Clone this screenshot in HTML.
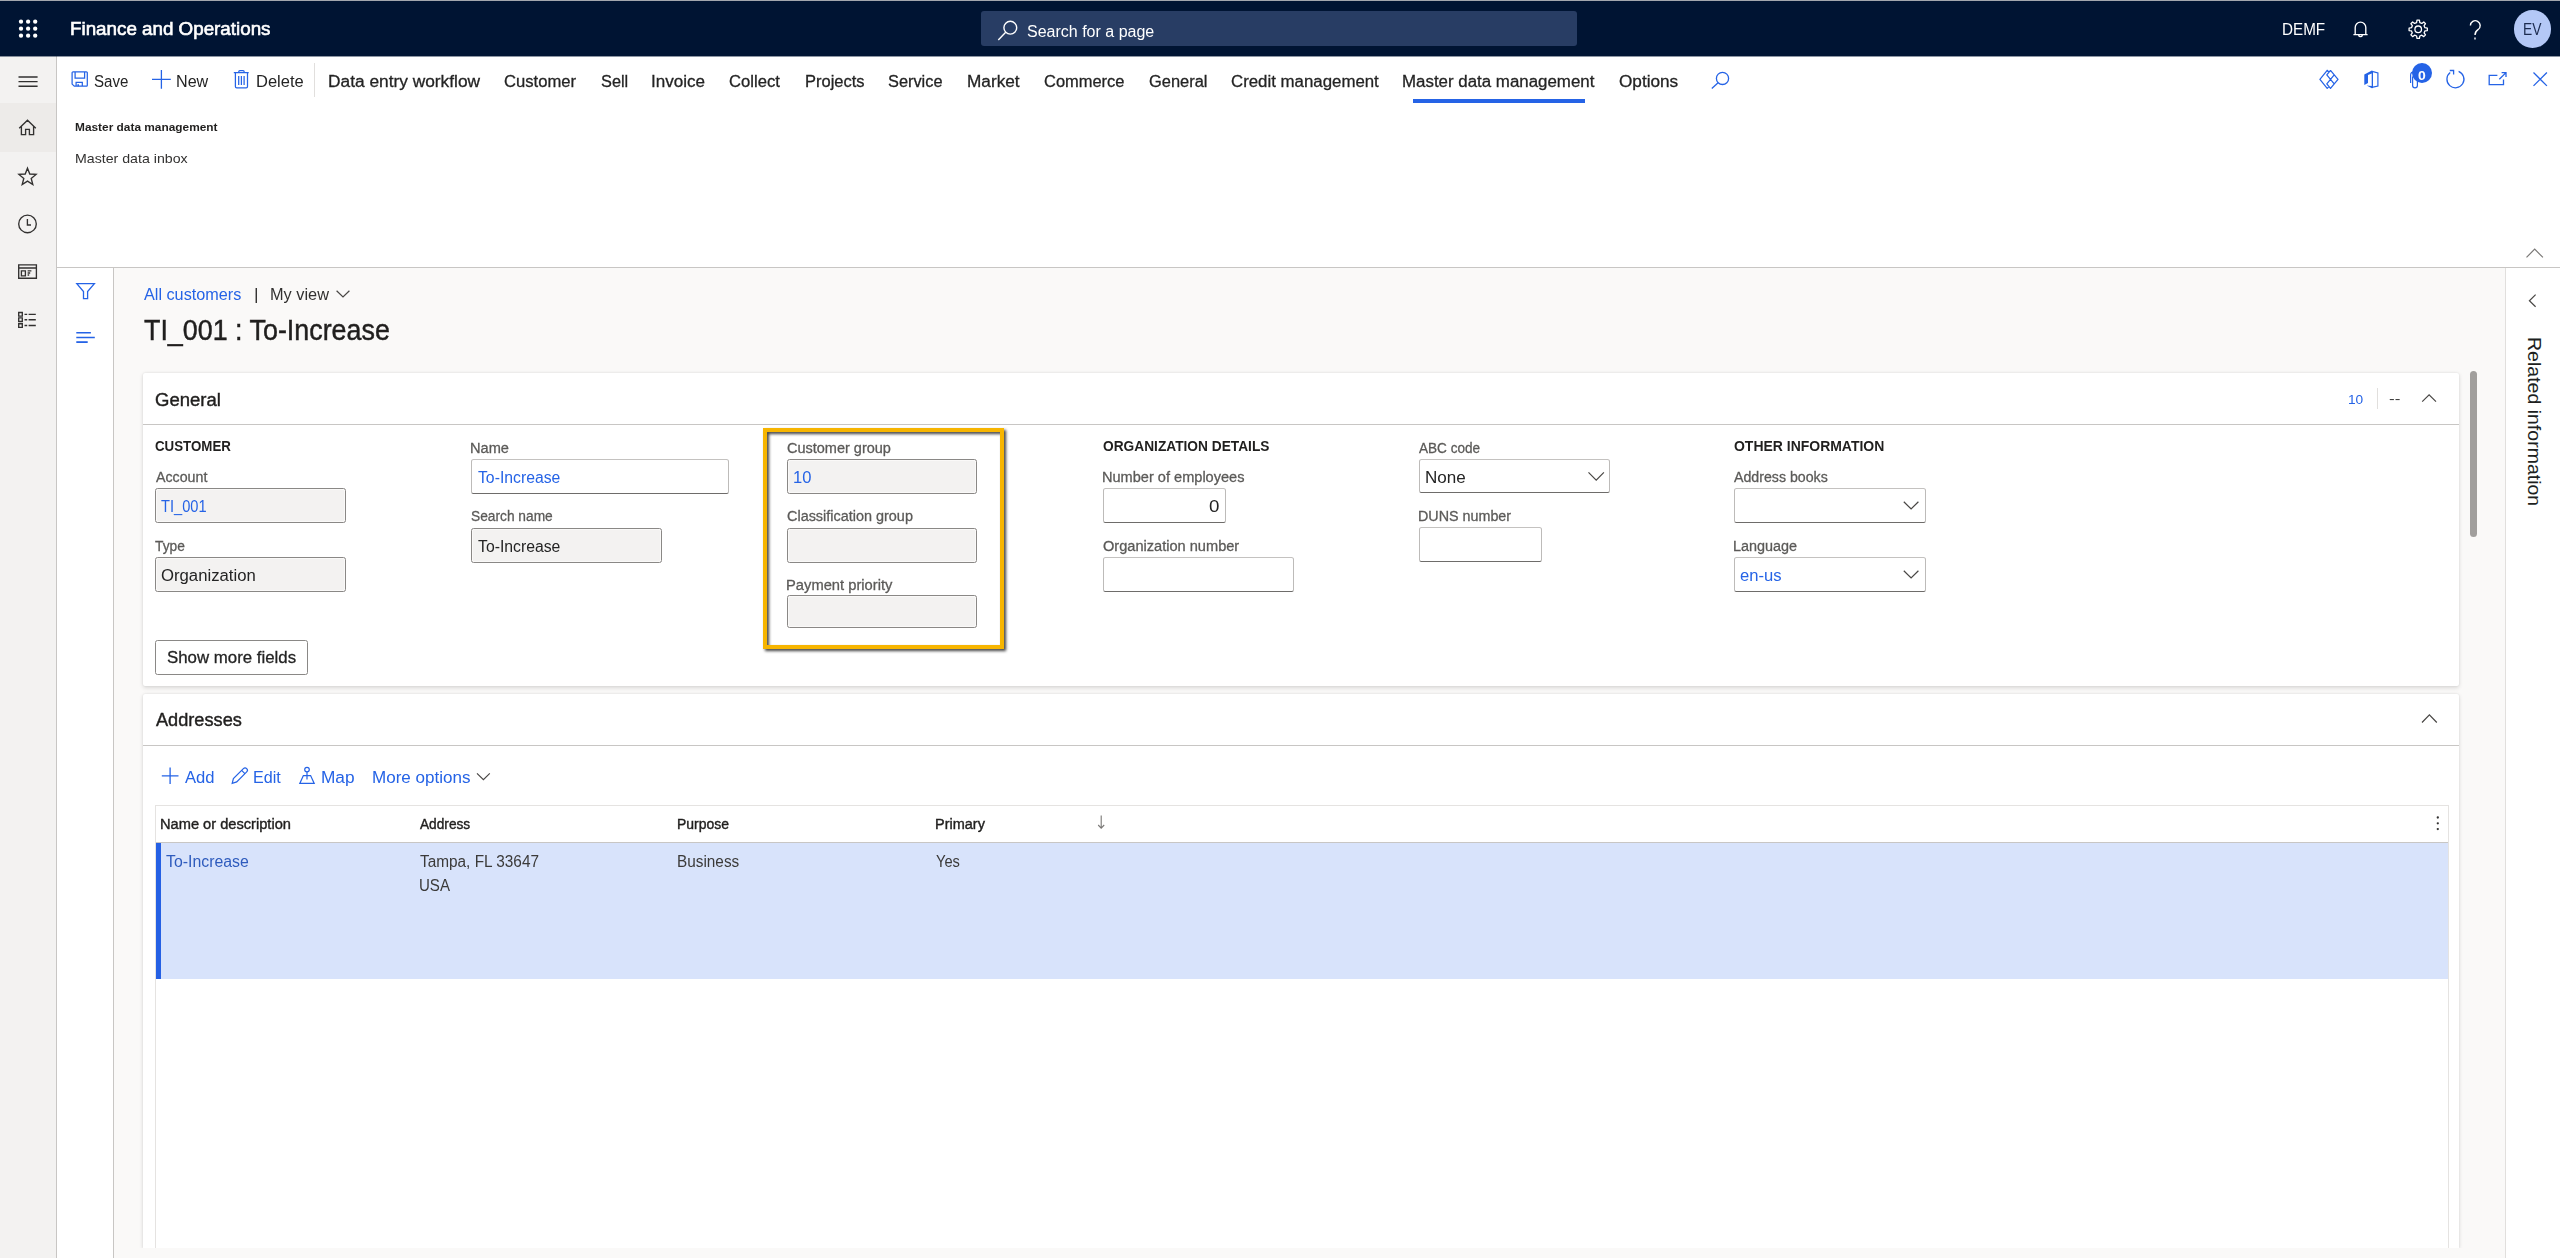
<!DOCTYPE html>
<html lang="en">
<head>
<meta charset="utf-8">
<title>TI_001 : To-Increase - Finance and Operations</title>
<style>
*{box-sizing:border-box;margin:0;padding:0}
html,body{width:2560px;height:1258px;overflow:hidden}
body{position:relative;background:#faf9f8;font-family:"Liberation Sans",sans-serif;color:#242424}
.abs,.t,svg.i{position:absolute}
.t{white-space:pre;line-height:1;transform-origin:0 50%;display:block}
svg.i{overflow:visible;fill:none;stroke-linecap:butt;stroke-linejoin:miter}
/* top bar */
#topline{left:0;top:0;width:2560px;height:1px;background:#a3a7ae;z-index:5}
#header{left:0;top:0;width:2560px;height:56px;background:#001433}
#hdredge{left:0;top:56px;width:2560px;height:1px;background:rgba(0,20,51,.45);z-index:6}
#searchbox{left:981px;top:11px;width:596px;height:35px;border-radius:3px;background:#283d64}
#avatar{left:2513.7px;top:10px;width:37.5px;height:37.5px;border-radius:50%;background:#b4c8f6}
/* left nav */
#nav{left:0;top:56px;width:56px;height:1202px;background:#f3f2f1}
#navline{left:56px;top:56px;width:1px;height:1202px;background:#c8c6c4}
#navsel{left:0;top:103px;width:56px;height:48.5px;background:#edebe9}
/* action pane */
#pane{left:57px;top:56px;width:2503px;height:211px;background:#fff}
#paneline{left:57px;top:267px;width:2503px;height:1px;background:#c8c6c4}
#absep{left:314px;top:63px;width:1px;height:34px;background:#e1dfdd}
#tabline{left:1413px;top:99px;width:172px;height:4px;background:#2563e6}
#badge{left:2412.2px;top:63.1px;width:19.8px;height:19.8px;border-radius:50%;background:#2563e6}
/* filter strip */
#strip{left:57px;top:268px;width:56px;height:990px;background:#fff}
#stripline{left:113px;top:268px;width:1px;height:990px;background:#c8c6c4}
/* right panel */
#rpanel{left:2506px;top:268px;width:54px;height:990px;background:#fff}
#rpline{left:2505px;top:268px;width:1px;height:990px;background:#e1dfdd}
#scroll{left:2470px;top:371px;width:7px;height:166px;border-radius:3.5px;background:#a19f9d}
/* cards */
.card{background:#fff;border-radius:2px;box-shadow:0 1.5px 4px rgba(0,0,0,.13),0 0 2px rgba(0,0,0,.08)}
#card1{left:143px;top:373px;width:2316px;height:313px}
#card2{left:143px;top:694px;width:2316px;height:553.5px;border-bottom-left-radius:0;border-bottom-right-radius:0}
.hline{height:1px;background:#c8c6c4}
#c1line{left:143px;top:424px;width:2316px}
#c2line{left:143px;top:745px;width:2316px}
#c1sep{left:2377px;top:388px;width:1px;height:21px;background:#e1dfdd}
/* inputs */
.in{border:1px solid #8a8886;border-radius:2.5px;background:#fff}
.ro{background:#f3f2f1;box-shadow:inset 0 0 0 1px #faf9f8}
.ed{border-color:#c4c2c0 #bdbbb9 #6e6c6a #bdbbb9}
#btnmore{left:155px;top:640px;width:153px;height:35px;border:1px solid #8a8886;border-radius:2.5px;background:#fff}
/* highlight frame */
#hl{left:763px;top:428px;width:241px;height:221px;border:4.2px solid #f7b500;filter:drop-shadow(2.5px 2.5px 1.6px rgba(0,0,0,.75))}
/* grid */
#grid{left:155px;top:805px;width:2294px;height:443px;border:1px solid #e5e3e1;border-bottom:0;background:#fff}
#ghline{left:156px;top:842px;width:2292px;height:1px;background:#c8c6c4}
#grow{left:156px;top:843px;width:2292px;height:136px;background:#d8e3fb}
#gbar{left:156px;top:843px;width:5px;height:136px;background:#2560e4}
#botmask{left:114px;top:1247.5px;width:2391px;height:11px;background:#faf9f8}

</style>
</head>
<body>
<!-- ===== Top navigation bar ===== -->
<div id="header" class="abs"></div>
<div id="topline" class="abs"></div>
<div id="hdredge" class="abs"></div>
<div id="searchbox" class="abs"></div>
<div id="avatar" class="abs"></div>
<!-- ===== Left navigation rail ===== -->
<div id="nav" class="abs"></div>
<div id="navsel" class="abs"></div>
<div id="navline" class="abs"></div>
<!-- ===== Action pane ===== -->
<div id="pane" class="abs"></div>
<div id="paneline" class="abs"></div>
<div id="absep" class="abs"></div>
<div id="tabline" class="abs"></div>
<!-- ===== Page chrome ===== -->
<div id="strip" class="abs"></div>
<div id="stripline" class="abs"></div>
<div id="rpanel" class="abs"></div>
<div id="rpline" class="abs"></div>
<div id="scroll" class="abs"></div>
<!-- ===== General fast tab ===== -->
<div id="card1" class="abs card"></div>
<div id="c1line" class="abs hline"></div>
<div id="c1sep" class="abs"></div>
<div class="abs in ro" style="left:155px;top:488px;width:191px;height:35px"></div>
<div class="abs in ro" style="left:155px;top:557px;width:191px;height:35px"></div>
<div class="abs in ed" style="left:471px;top:459px;width:258px;height:35px"></div>
<div class="abs in ro" style="left:471px;top:528px;width:191px;height:35px"></div>
<div class="abs in ro" style="left:787px;top:459px;width:190px;height:35px"></div>
<div class="abs in ro" style="left:787px;top:528px;width:190px;height:35px"></div>
<div class="abs in ro" style="left:787px;top:595px;width:190px;height:33px"></div>
<div class="abs in ed" style="left:1103px;top:488px;width:123px;height:35px"></div>
<div class="abs in ed" style="left:1103px;top:557px;width:191px;height:35px"></div>
<div class="abs in ed" style="left:1419px;top:459px;width:191px;height:34px"></div>
<div class="abs in ed" style="left:1419px;top:527px;width:123px;height:35px"></div>
<div class="abs in ed" style="left:1734px;top:488px;width:192px;height:35px"></div>
<div class="abs in ed" style="left:1734px;top:557px;width:192px;height:35px"></div>
<div id="btnmore" class="abs"></div>
<div id="hl" class="abs"></div>
<!-- ===== Addresses fast tab ===== -->
<div id="card2" class="abs card"></div>
<div id="c2line" class="abs hline"></div>
<div id="grid" class="abs"></div>
<div id="ghline" class="abs"></div>
<div id="grow" class="abs"></div>
<div id="gbar" class="abs"></div>
<div id="botmask" class="abs"></div>
<div id="badge" class="abs"></div>
<svg class="i" id="icons" style="left:0;top:0" width="2560" height="1258" viewBox="0 0 2560 1258">
<g id="ic-waffle" fill="#fff" stroke="none">
<circle cx="21.0" cy="21.7" r="2.15"/>
<circle cx="28.1" cy="21.7" r="2.15"/>
<circle cx="35.2" cy="21.7" r="2.15"/>
<circle cx="21.0" cy="28.7" r="2.15"/>
<circle cx="28.1" cy="28.7" r="2.15"/>
<circle cx="35.2" cy="28.7" r="2.15"/>
<circle cx="21.0" cy="35.7" r="2.15"/>
<circle cx="28.1" cy="35.7" r="2.15"/>
<circle cx="35.2" cy="35.7" r="2.15"/>
</g>
<g id="ic-hsearch" stroke="#fff" stroke-width="1.4"><circle cx="1010.3" cy="27.7" r="6.4"/><path d="M1005.7 32.3L998.3 39.9"/></g>
<g id="ic-bell" stroke="#fff" stroke-width="1.35"><path d="M2353.4 34.6H2367.6M2355.2 34.6V27.4a5.3 5.3 0 0 1 10.6 0V34.6M2358.6 35.2a2 2 0 0 0 3.8 0"/></g>
<g id="ic-gear" stroke="#fff" stroke-width="1.3" stroke-linejoin="round"><path d="M2427.32 28.08L2427.32 30.52L2424.91 30.91L2424.08 32.91L2425.51 34.88L2423.78 36.61L2421.81 35.18L2419.81 36.01L2419.42 38.42L2416.98 38.42L2416.59 36.01L2414.59 35.18L2412.62 36.61L2410.89 34.88L2412.32 32.91L2411.49 30.91L2409.08 30.52L2409.08 28.08L2411.49 27.69L2412.32 25.69L2410.89 23.72L2412.62 21.99L2414.59 23.42L2416.59 22.59L2416.98 20.18L2419.42 20.18L2419.81 22.59L2421.81 23.42L2423.78 21.99L2425.51 23.72L2424.08 25.69L2424.91 27.69Z"/><circle cx="2418.2" cy="29.3" r="3.3"/></g>
<g id="ic-help" stroke="#fff" stroke-width="1.4"><path d="M2470.4 25.6a4.9 4.9 0 1 1 7.6 4.1c-2.2 1.5-3 2.6-3 5.3"/><path d="M2475 37.6V39.4"/></g>
<g id="ic-nav" stroke="#323130" stroke-width="1.35">
<path d="M18.5 77H37.6M18.5 81.6H37.6M18.5 86.2H37.6"/>
<path d="M19.2 128.2L27.5 120.2L35.8 128.2M21.4 126.6V134.6H25.6V129.4H29.4V134.6H33.6V126.6"/>
<path d="M27.50 168.20L29.79 174.04L36.06 174.42L31.21 178.41L32.79 184.48L27.50 181.10L22.21 184.48L23.79 178.41L18.94 174.42L25.21 174.04Z"/>
<circle cx="27.5" cy="223.9" r="8.8"/><path d="M27.4 219V225H31"/>
<path d="M18.7 264.8H36.4V278.2H18.7ZM18.7 268H36.4M21.4 270.8H25.4V275.8H21.4ZM27.6 270.9H31.4M27.6 273H30.2M27.6 275H29.2"/>
<path d="M18.7 312.5h3.6v3.6h-3.6ZM24.5 314.3H27.2M28.6 314.3H35.8"/>
<path d="M18.7 317.9h3.6v3.6h-3.6ZM24.5 319.7H27.2M28.6 319.7H35.8"/>
<path d="M18.7 323.7h3.6v3.6h-3.6ZM24.5 325.5H27.2M28.6 325.5H35.8"/>
</g>
<g id="ic-actions" stroke="#2563e6" stroke-width="1.3">
<path d="M73.1 71.9H86.4a.9 .9 0 0 1 .9 .9V85.3a.9 .9 0 0 1-.9 .9H74.3L72.1 84.1V72.8a.9 .9 0 0 1 1-.9ZM75.1 72V78.2H84.6V72M76.1 86.1V82.4H82.3V86.1" stroke-width="1.25"/><path d="M78.2 84.3V86.2" stroke-width="1.5"/>
<path d="M152 79.3H170.8M161.4 70V88.8"/>
<path d="M233.8 72.5H248.7M238.8 72.4V71.6a1 1 0 0 1 1-1H243.1a1 1 0 0 1 1 1V72.4M235.4 72.6V86.6a1.3 1.3 0 0 0 1.3 1.3H246.2a1.3 1.3 0 0 0 1.3-1.3V72.6M238.7 76V84.9M241.4 76V84.9M244.1 76V84.9" stroke-width="1.25"/>
<circle cx="1722.5" cy="78.4" r="6.1"/><path d="M1718.1 82.7L1711.8 88.5"/>
<path d="M2328.9 72.1L2327.2 70.3L2319.9 79.3L2327.2 88.4L2328.9 86.6M2330.5 70.3L2338 79.3L2330.5 88.4L2326.8 83.8L2334.2 74.8M2330.5 70.3L2326.8 74.8L2334.2 83.8" stroke-width="1.25" stroke-linejoin="round"/>
<path d="M2364.3 74.6L2371.9 70.6L2373 70.9V88L2371.9 88.2L2366.6 85.4L2371.7 85.9V73.4L2368 75V83L2364.3 84.9Z" fill="#2563e6" stroke="none"/>
<path d="M2373 71.7L2377.9 72.9V86L2373 87.2" stroke-width="1.2"/>
<path d="M2410.6 83V75.2a3.4 3.4 0 0 1 6.8 0V85.4a2.4 2.4 0 0 1-4.8 0V76.6" stroke-width="1.2"/>
<path d="M2458.6 71.4A8.5 8.5 0 1 1 2450.2 72.6M2449.8 70.5H2453.6V74.4"/>
<path d="M2497.4 75.3H2489.2V84.6H2503.5V79.6M2499.3 79.3L2506 72.6M2501.6 72.6H2506V77"/>
<path d="M2533.5 72.5L2546.9 85.9M2546.9 72.5L2533.5 85.9"/>
<path d="M76.8 283.6H94.4L87.6 291.6V298.6H83.5V291.6Z"/>
<path d="M76.3 332.7H90.9M76.3 337.5H94.8" stroke-width="1.4"/><path d="M76.3 342.1H87.7" stroke-width="1.8"/>
<path d="M161.8 775.8H178.5M170.1 767.4V784.1"/>
<path d="M232.2 783.4L233.4 778.6L243.4 768.6a2.3 2.3 0 0 1 3.3 3.3L236.7 781.9ZM241.6 770.4L244.9 773.7" stroke-width="1.2"/>
<circle cx="307" cy="769.6" r="2.3" stroke-width="1.2"/><path d="M307 772V779.4M303.4 775.6L299.8 783.4H314.2L310.6 775.6Z" stroke-width="1.2"/>
</g>
<g id="ic-chev" stroke="#484644" stroke-width="1.2">
<path d="M336.6 290.7L343 297L349.4 290.7"/>
<path d="M477 773.4L483.4 779.6L489.8 773.4"/>
<path d="M2422.2 401.6L2429.1 394.8L2436 401.6"/>
<path d="M2422 722.5L2429.4 714.8L2436.8 722.5"/>
<path d="M1588.5 472.4L1596.2 480.1L1603.9 472.4"/>
<path d="M1903.8 501.8L1911.1 509L1918.4 501.8"/>
<path d="M1903.8 570.8L1911.1 578L1918.4 570.8"/>
<path d="M2535.6 294.6L2529.4 300.7L2535.6 306.8"/>
</g>
<g id="ic-gray" stroke="#7a7876" stroke-width="1.2">
<path d="M2526.5 257.4L2534.7 249.2L2542.9 257.4"/>
<path d="M1101.2 815.6V828M1098.2 825L1101.2 828.2L1104.2 825" stroke-width="1.1"/>
</g>
<g id="ic-more" fill="#323130" stroke="none"><circle cx="2437.8" cy="817.5" r="1.15"/><circle cx="2437.8" cy="823.3" r="1.15"/><circle cx="2437.8" cy="829.1" r="1.15"/></g>
</svg>

<!-- text layer -->
<div id="text-layer">
<header id="txt-header" aria-label="Top navigation bar">
<span class="t" style="left:70.31px;top:20px;font-size:18.6px;color:#ffffff;font-weight:400;-webkit-text-stroke:0.62px currentColor;transform:scaleX(1.0103);">Finance and Operations</span>
<span class="t" style="left:1027.24px;top:24px;font-size:16px;color:#ffffff;font-weight:400;transform:scaleX(1.0004);">Search for a page</span>
<span class="t" style="left:2281.72px;top:22px;font-size:16px;color:#ffffff;font-weight:400;transform:scaleX(0.9521);">DEMF</span>
<span class="t" style="left:2523.19px;top:22px;font-size:16px;color:#1c2b4f;font-weight:400;transform:scaleX(0.8645);">EV</span>
</header>
<nav id="txt-actionpane" aria-label="Action pane">
<span class="t" style="left:94.29px;top:74px;font-size:16px;color:#242424;font-weight:400;transform:scaleX(0.9424);">Save</span>
<span class="t" style="left:176.09px;top:74px;font-size:16px;color:#242424;font-weight:400;transform:scaleX(1.0075);">New</span>
<span class="t" style="left:256.43px;top:74px;font-size:16px;color:#242424;font-weight:400;transform:scaleX(1.0311);">Delete</span>
<span class="t" style="left:327.68px;top:74px;font-size:16px;color:#242424;font-weight:400;-webkit-text-stroke:0.28px currentColor;transform:scaleX(1.0824);">Data entry workflow</span>
<span class="t" style="left:503.96px;top:74px;font-size:16px;color:#242424;font-weight:400;-webkit-text-stroke:0.28px currentColor;transform:scaleX(1.0387);">Customer</span>
<span class="t" style="left:600.60px;top:74px;font-size:16px;color:#242424;font-weight:400;-webkit-text-stroke:0.28px currentColor;transform:scaleX(1.0192);">Sell</span>
<span class="t" style="left:651.30px;top:74px;font-size:16px;color:#242424;font-weight:400;-webkit-text-stroke:0.28px currentColor;transform:scaleX(1.0658);">Invoice</span>
<span class="t" style="left:729.35px;top:74px;font-size:16px;color:#242424;font-weight:400;-webkit-text-stroke:0.28px currentColor;transform:scaleX(1.0388);">Collect</span>
<span class="t" style="left:804.67px;top:74px;font-size:16px;color:#242424;font-weight:400;-webkit-text-stroke:0.28px currentColor;transform:scaleX(1.0297);">Projects</span>
<span class="t" style="left:888.42px;top:74px;font-size:16px;color:#242424;font-weight:400;-webkit-text-stroke:0.28px currentColor;transform:scaleX(1.0209);">Service</span>
<span class="t" style="left:966.68px;top:74px;font-size:16px;color:#242424;font-weight:400;-webkit-text-stroke:0.28px currentColor;transform:scaleX(1.0757);">Market</span>
<span class="t" style="left:1044.03px;top:74px;font-size:16px;color:#242424;font-weight:400;-webkit-text-stroke:0.28px currentColor;transform:scaleX(1.0280);">Commerce</span>
<span class="t" style="left:1148.84px;top:74px;font-size:16px;color:#242424;font-weight:400;-webkit-text-stroke:0.28px currentColor;transform:scaleX(1.0278);">General</span>
<span class="t" style="left:1230.87px;top:74px;font-size:16px;color:#242424;font-weight:400;-webkit-text-stroke:0.28px currentColor;transform:scaleX(1.0518);">Credit management</span>
<span class="t" style="left:1402.20px;top:74px;font-size:16px;color:#242424;font-weight:400;-webkit-text-stroke:0.28px currentColor;transform:scaleX(1.0550);">Master data management</span>
<span class="t" style="left:1619.45px;top:74px;font-size:16px;color:#242424;font-weight:400;-webkit-text-stroke:0.28px currentColor;transform:scaleX(1.0728);">Options</span>
<span class="t" style="left:2418.36px;top:69px;font-size:13.6px;color:#ffffff;font-weight:700;transform:scaleX(1.0273);">0</span>
<span class="t" style="left:74.69px;top:122px;font-size:11.8px;color:#201f1e;font-weight:700;transform:scaleX(1.0065);">Master data management</span>
<span class="t" style="left:74.80px;top:152px;font-size:13.6px;color:#323130;font-weight:400;transform:scaleX(1.0422);">Master data inbox</span>
</nav>
<div id="txt-pagehead" aria-label="Page title">
<span class="t" style="left:144.28px;top:287px;font-size:16px;color:#2563e6;font-weight:400;transform:scaleX(1.0130);">All customers</span>
<span class="t" style="left:253.55px;top:287px;font-size:16px;color:#323130;font-weight:400;transform:scaleX(1.0894);">|</span>
<span class="t" style="left:269.97px;top:287px;font-size:16px;color:#323130;font-weight:400;transform:scaleX(1.0196);">My view</span>
<span class="t" style="left:144.22px;top:316px;font-size:28.6px;color:#201f1e;font-weight:400;-webkit-text-stroke:0.45px currentColor;transform:scaleX(0.9393);">TI_001 : To-Increase</span>
</div>
<section id="txt-general" aria-label="General fast tab">
<span class="t" style="left:155.09px;top:391px;font-size:18px;color:#201f1e;font-weight:400;-webkit-text-stroke:0.42px currentColor;transform:scaleX(1.0279);">General</span>
<span class="t" style="left:2347.98px;top:393px;font-size:13.6px;color:#2563e6;font-weight:400;transform:scaleX(1.0073);">10</span>
<span class="t" style="left:2389.18px;top:392px;font-size:13.6px;color:#323130;font-weight:400;transform:scaleX(1.2498);">--</span>
<span class="t" style="left:154.53px;top:440px;font-size:13.8px;color:#201f1e;font-weight:700;transform:scaleX(0.9648);">CUSTOMER</span>
<span class="t" style="left:155.85px;top:471px;font-size:13.8px;color:#5b5a58;font-weight:400;-webkit-text-stroke:0.28px currentColor;transform:scaleX(1.0300);">Account</span>
<span class="t" style="left:161.26px;top:499px;font-size:16px;color:#2563e6;font-weight:400;transform:scaleX(0.9140);">TI_001</span>
<span class="t" style="left:155.37px;top:540px;font-size:13.8px;color:#5b5a58;font-weight:400;-webkit-text-stroke:0.28px currentColor;transform:scaleX(0.9958);">Type</span>
<span class="t" style="left:161.20px;top:568px;font-size:16px;color:#242424;font-weight:400;transform:scaleX(1.0444);">Organization</span>
<span class="t" style="left:470.32px;top:442px;font-size:13.8px;color:#5b5a58;font-weight:400;-webkit-text-stroke:0.28px currentColor;transform:scaleX(1.0589);">Name</span>
<span class="t" style="left:477.98px;top:470px;font-size:16px;color:#2563e6;font-weight:400;transform:scaleX(0.9842);">To-Increase</span>
<span class="t" style="left:470.56px;top:510px;font-size:13.8px;color:#5b5a58;font-weight:400;-webkit-text-stroke:0.28px currentColor;transform:scaleX(0.9960);">Search name</span>
<span class="t" style="left:477.93px;top:539px;font-size:16px;color:#242424;font-weight:400;transform:scaleX(0.9852);">To-Increase</span>
<span class="t" style="left:787.13px;top:442px;font-size:13.8px;color:#5b5a58;font-weight:400;-webkit-text-stroke:0.28px currentColor;transform:scaleX(1.0506);">Customer group</span>
<span class="t" style="left:792.75px;top:470px;font-size:16px;color:#2563e6;font-weight:400;transform:scaleX(1.0329);">10</span>
<span class="t" style="left:787.06px;top:510px;font-size:13.8px;color:#5b5a58;font-weight:400;-webkit-text-stroke:0.28px currentColor;transform:scaleX(1.0458);">Classification group</span>
<span class="t" style="left:785.90px;top:579px;font-size:13.8px;color:#5b5a58;font-weight:400;-webkit-text-stroke:0.28px currentColor;transform:scaleX(1.0678);">Payment priority</span>
<span class="t" style="left:1102.52px;top:440px;font-size:13.8px;color:#201f1e;font-weight:700;transform:scaleX(0.9945);">ORGANIZATION DETAILS</span>
<span class="t" style="left:1101.93px;top:471px;font-size:13.8px;color:#5b5a58;font-weight:400;-webkit-text-stroke:0.28px currentColor;transform:scaleX(1.0557);">Number of employees</span>
<span class="t" style="left:1209.43px;top:499px;font-size:16px;color:#242424;font-weight:400;transform:scaleX(1.1688);">0</span>
<span class="t" style="left:1102.57px;top:540px;font-size:13.8px;color:#5b5a58;font-weight:400;-webkit-text-stroke:0.28px currentColor;transform:scaleX(1.0572);">Organization number</span>
<span class="t" style="left:1419.10px;top:442px;font-size:13.8px;color:#5b5a58;font-weight:400;-webkit-text-stroke:0.28px currentColor;transform:scaleX(0.9846);">ABC code</span>
<span class="t" style="left:1424.84px;top:470px;font-size:16px;color:#242424;font-weight:400;transform:scaleX(1.0659);">None</span>
<span class="t" style="left:1418.14px;top:510px;font-size:13.8px;color:#5b5a58;font-weight:400;-webkit-text-stroke:0.28px currentColor;transform:scaleX(1.0375);">DUNS number</span>
<span class="t" style="left:1734.37px;top:440px;font-size:13.8px;color:#201f1e;font-weight:700;transform:scaleX(1.0124);">OTHER INFORMATION</span>
<span class="t" style="left:1734.30px;top:471px;font-size:13.8px;color:#5b5a58;font-weight:400;-webkit-text-stroke:0.28px currentColor;transform:scaleX(1.0276);">Address books</span>
<span class="t" style="left:1733.13px;top:540px;font-size:13.8px;color:#5b5a58;font-weight:400;-webkit-text-stroke:0.28px currentColor;transform:scaleX(1.0435);">Language</span>
<span class="t" style="left:1740.20px;top:568px;font-size:16px;color:#2563e6;font-weight:400;transform:scaleX(1.0379);">en-us</span>
<span class="t" style="left:166.59px;top:650px;font-size:16px;color:#242424;font-weight:400;-webkit-text-stroke:0.28px currentColor;transform:scaleX(1.0520);">Show more fields</span>
</section>
<aside id="txt-related" aria-label="Related information">
<span class="t" style="left:2542.60px;top:336.93px;font-size:18.8px;color:#201f1e;font-weight:400;transform-origin:0 0;transform:rotate(90deg) scaleX(1.0390);">Related information</span>
</aside>
<section id="txt-addresses" aria-label="Addresses fast tab">
<span class="t" style="left:155.55px;top:711px;font-size:18px;color:#201f1e;font-weight:400;-webkit-text-stroke:0.42px currentColor;transform:scaleX(1.0090);">Addresses</span>
<span class="t" style="left:184.81px;top:770px;font-size:16px;color:#2563e6;font-weight:400;transform:scaleX(1.0368);">Add</span>
<span class="t" style="left:253.21px;top:770px;font-size:16px;color:#2563e6;font-weight:400;transform:scaleX(1.0070);">Edit</span>
<span class="t" style="left:321.26px;top:770px;font-size:16px;color:#2563e6;font-weight:400;transform:scaleX(1.0781);">Map</span>
<span class="t" style="left:372.08px;top:770px;font-size:16px;color:#2563e6;font-weight:400;transform:scaleX(1.0640);">More options</span>
<span class="t" style="left:160.32px;top:818px;font-size:13.8px;color:#201f1e;font-weight:400;-webkit-text-stroke:0.38px currentColor;transform:scaleX(1.0608);">Name or description</span>
<span class="t" style="left:419.51px;top:818px;font-size:13.8px;color:#201f1e;font-weight:400;-webkit-text-stroke:0.38px currentColor;transform:scaleX(0.9909);">Address</span>
<span class="t" style="left:676.96px;top:818px;font-size:13.8px;color:#201f1e;font-weight:400;-webkit-text-stroke:0.38px currentColor;transform:scaleX(1.0120);">Purpose</span>
<span class="t" style="left:935.32px;top:818px;font-size:13.8px;color:#201f1e;font-weight:400;-webkit-text-stroke:0.38px currentColor;transform:scaleX(1.0507);">Primary</span>
<span class="t" style="left:165.83px;top:854px;font-size:16px;color:#2e5bbd;font-weight:400;transform:scaleX(0.9899);">To-Increase</span>
<span class="t" style="left:420.47px;top:854px;font-size:16px;color:#3b3a39;font-weight:400;transform:scaleX(0.9601);">Tampa, FL 33647</span>
<span class="t" style="left:419.13px;top:878px;font-size:16px;color:#3b3a39;font-weight:400;transform:scaleX(0.9411);">USA</span>
<span class="t" style="left:676.98px;top:854px;font-size:16px;color:#3b3a39;font-weight:400;transform:scaleX(0.9587);">Business</span>
<span class="t" style="left:936.24px;top:854px;font-size:16px;color:#3b3a39;font-weight:400;transform:scaleX(0.9160);">Yes</span>
</section>
</div>
</body>
</html>
